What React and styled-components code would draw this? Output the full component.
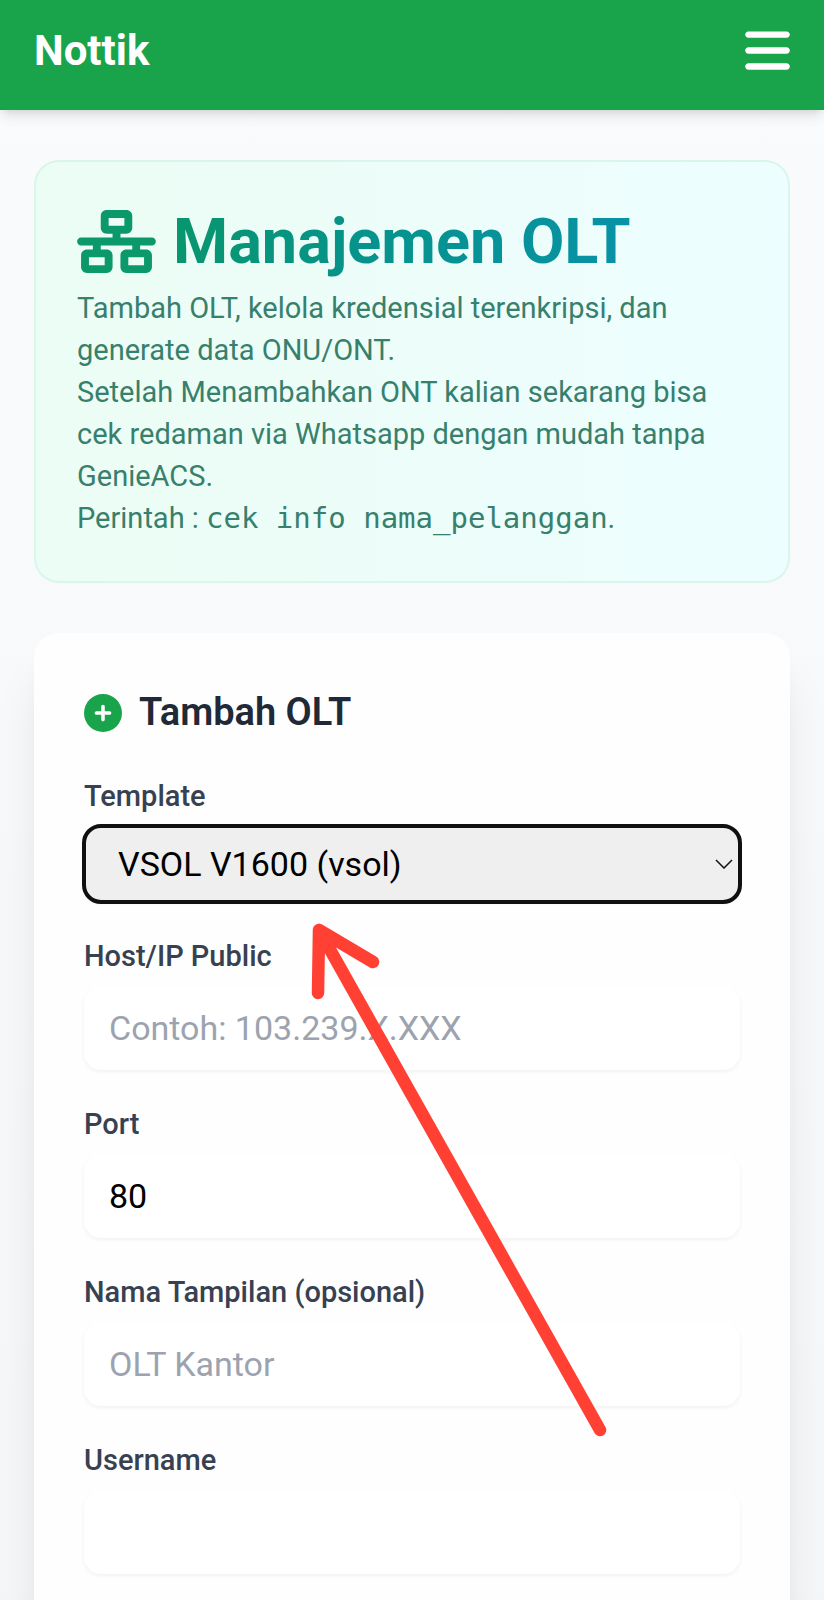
import React, { useState } from 'react';
import styled, { createGlobalStyle } from 'styled-components';
import { FaBars, FaCirclePlus, FaNetworkWired } from 'react-icons/fa6';

const GlobalStyle = createGlobalStyle`
  *, *::before, *::after {
    box-sizing: border-box;
  }
  body {
    margin: 0;
    background: #f8fafc;
    font-family: Roboto, "Liberation Sans", Arial, sans-serif;
    color: #1f2937;
  }
`;

const Page = styled.div`
  display: flex;
  flex-direction: column;
  min-height: 100vh;
  background: linear-gradient(to bottom, #fafbfd, #f5f6f8);
`;

const Header = styled.header`
  display: flex;
  align-items: center;
  justify-content: space-between;
  padding: 21px 34px 30px;
  background: #19a44b;
  box-shadow: 0 8px 12px -2px rgba(0, 0, 0, 0.1), 0 4px 8px -4px rgba(0, 0, 0, 0.1);
`;

const Brand = styled.div`
  font-size: 42px;
  font-weight: 700;
  line-height: 59px;
  color: white;
`;

const MenuButton = styled.button`
  display: flex;
  padding: 0;
  border: 0;
  background: none;
  color: white;
  cursor: pointer;

  svg {
    width: 45px;
    height: 51px;
  }
`;

const Main = styled.main`
  display: flex;
  flex-direction: column;
  gap: 50px;
  padding: 50px 34px;
`;

const Hero = styled.section`
  padding: 42px 41px;
  border: 2px solid #d9f6ea;
  border-radius: 25px;
  background: linear-gradient(to right, #ecfdf5, #ecfeff);
`;

const HeroTitle = styled.h1`
  display: flex;
  align-items: center;
  gap: 17px;
  margin: 0 0 8px;
  font-size: 63px;
  font-weight: 700;
  line-height: 75px;
  color: #0b986a;

  svg {
    flex: none;
    width: 79px;
    height: 63px;
  }
`;

const GradientText = styled.span`
  background: linear-gradient(to right, #08966e, #06938a 40%, #0892a6);
  background-clip: text;
  color: transparent;
`;

const HeroText = styled.p`
  margin: 0;
  font-size: 29px;
  line-height: 42px;
  color: #37806c;
`;

const Command = styled.code`
  font-family: "DejaVu Sans Mono", "Liberation Mono", monospace;
  font-size: 29px;
  line-height: 1;
`;

const Card = styled.section`
  position: relative;
  padding: 50px 50px 84px;
  border-radius: 25px;
  background: #fefefe;
  box-shadow: 0 42px 52px -10px rgba(0, 0, 0, 0.1), 0 17px 21px -13px rgba(0, 0, 0, 0.1);
`;

const CardTitle = styled.h2`
  display: flex;
  align-items: center;
  gap: 17px;
  margin: 0 0 33px;
  font-size: 38px;
  font-weight: 600;
  line-height: 59px;
  color: #1f2937;

  svg {
    color: #19a44b;
  }
`;

const Form = styled.form`
  display: flex;
  flex-direction: column;
  gap: 33px;
`;

const Field = styled.div`
  display: flex;
  flex-direction: column;
  gap: 9px;
`;

const Label = styled.label`
  font-size: 29px;
  font-weight: 500;
  line-height: 42px;
  color: #374151;
`;

const Input = styled.input`
  width: 100%;
  height: 84px;
  padding: 0 25px;
  border: 0;
  border-radius: 17px;
  outline: none;
  background: white;
  box-shadow: 0 2px 4px rgba(0, 0, 0, 0.05);
  font: inherit;
  font-size: 34px;
  color: black;

  &::placeholder {
    color: #9ca3af;
    opacity: 1;
  }
`;

const SelectWrap = styled.div`
  position: relative;
`;

const Select = styled.select`
  display: block;
  width: 100%;
  height: 76px;
  padding: 0 34px;
  border: 0;
  border-radius: 17px;
  outline: 4px solid #101010;
  outline-offset: -2px;
  background: #efefef;
  box-shadow: 0 2px 4px rgba(0, 0, 0, 0.05);
  appearance: none;
  font: inherit;
  font-size: 34px;
  color: black;
`;

const Chevron = styled.svg`
  position: absolute;
  top: 50%;
  right: 7px;
  width: 18px;
  height: 10px;
  margin-top: -5px;
  pointer-events: none;
`;

// Hand-drawn pointer lying over the form, aimed at the template select
const Pointer = styled.svg`
  position: absolute;
  top: 288px;
  left: 276px;
  width: 300px;
  height: 520px;
  pointer-events: none;
`;

const templates = [
  { value: 'vsol', label: 'VSOL V1600 (vsol)' },
];

const fields = [
  { id: 'host', label: 'Host/IP Public', placeholder: 'Contoh: 103.239.X.XXX' },
  { id: 'port', label: 'Port', value: '80' },
  { id: 'name', label: 'Nama Tampilan (opsional)', placeholder: 'OLT Kantor' },
  { id: 'username', label: 'Username' },
];

export default function App() {
  const [template, setTemplate] = useState('vsol');

  return (
    <>
      <GlobalStyle />
      <Page>
        <Header>
          <Brand>Nottik</Brand>
          <MenuButton type="button" aria-label="Menu">
            <FaBars />
          </MenuButton>
        </Header>
        <Main>
          <Hero>
            <HeroTitle>
              <FaNetworkWired />
              <GradientText>Manajemen OLT</GradientText>
            </HeroTitle>
            <HeroText>
              Tambah OLT, kelola kredensial terenkripsi, dan generate data ONU/ONT.
              <br />
              Setelah Menambahkan ONT kalian sekarang bisa cek redaman via Whatsapp
              dengan mudah tanpa GenieACS.
              <br />
              Perintah : <Command>cek info nama_pelanggan</Command>.
            </HeroText>
          </Hero>
          <Card>
            <CardTitle>
              <FaCirclePlus />
              Tambah OLT
            </CardTitle>
            <Form onSubmit={(e) => e.preventDefault()}>
              <Field>
                <Label htmlFor="template">Template</Label>
                <SelectWrap>
                  <Select
                    id="template"
                    value={template}
                    onChange={(e) => setTemplate(e.target.value)}
                  >
                    {templates.map((t) => (
                      <option key={t.value} value={t.value}>{t.label}</option>
                    ))}
                  </Select>
                  <Chevron viewBox="0 0 18 10" fill="none" stroke="#111" strokeWidth="1.5">
                    <path d="M1 1l8 8 8-8" />
                  </Chevron>
                </SelectWrap>
              </Field>
              {fields.map((f) => (
                <Field key={f.id}>
                  <Label htmlFor={f.id}>{f.label}</Label>
                  <Input
                    id={f.id}
                    type="text"
                    placeholder={f.placeholder}
                    defaultValue={f.value}
                  />
                </Field>
              ))}
            </Form>
            <Pointer
              viewBox="0 0 300 520"
              fill="none"
              stroke="#ff4033"
              strokeWidth="12.5"
              strokeLinecap="round"
              strokeLinejoin="round"
              aria-hidden="true"
            >
              <path d="M8 72L9 9l54 32M9 9l281 500" />
            </Pointer>
          </Card>
        </Main>
      </Page>
    </>
  );
}
